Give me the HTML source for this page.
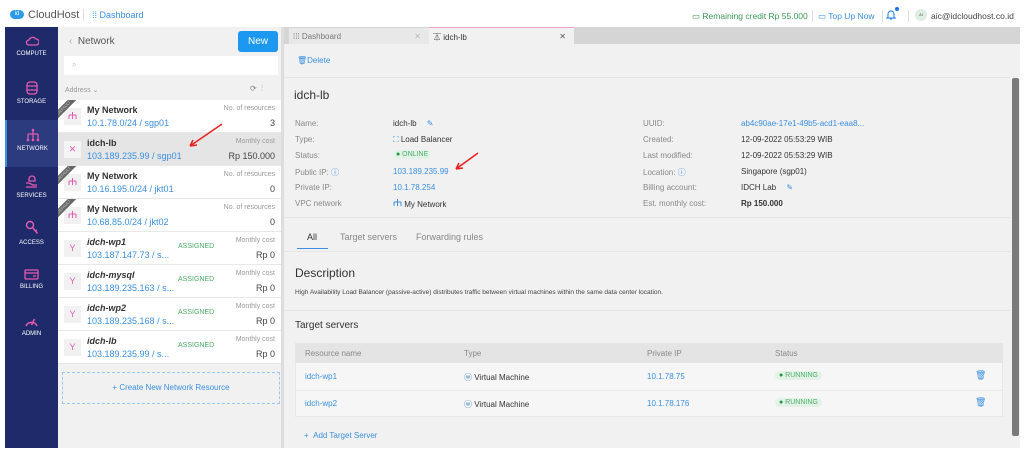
<!DOCTYPE html>
<html><head><meta charset="utf-8"><style>
*{box-sizing:border-box;margin:0;padding:0}
body{width:1024px;height:454px;background:#fff;font-family:"Liberation Sans",sans-serif;position:relative;overflow:hidden;font-size:8px;color:#333}
.a{position:absolute}
.blue{color:#3a8fe0}
.lbl{color:#888;font-size:8px}
.side{left:5px;top:27px;width:53px;height:421px;background:#1e2a69}
.nav{position:absolute;left:0;width:53px;text-align:center;color:#fff;font-size:6px}
.nav svg{display:block;margin:0 auto 4px}
.list{left:58px;top:27px;width:226px;height:421px;background:#f1f1f1;border-right:3px solid #ddd}
.row{position:absolute;left:0;width:223px;height:33px;background:#fff;border-bottom:1px solid #e8e8e8;overflow:hidden}
.ic{position:absolute;left:6px;top:8px;width:17px;height:17px;background:#f1f1f1;color:#e55bb0;font-size:9px;text-align:center;line-height:17px}
.ic svg{margin-top:4px}
.nm{position:absolute;left:29px;top:5px;font-weight:bold;font-size:9px;color:#333}
.ip{position:absolute;left:29px;top:18px;font-size:9px;color:#3a8fe0}
.rl{position:absolute;right:6px;top:5px;font-size:7px;color:#999}
.rv{position:absolute;right:6px;top:18px;font-size:9px;color:#444}
.asg{position:absolute;left:120px;top:11px;font-size:7px;color:#4caf6a}
.rib{position:absolute;left:-9px;top:5px;width:30px;height:6px;background:#666;transform:rotate(-45deg);color:#ccc;font-size:4px;text-align:center;line-height:6px}
.main{left:284px;top:27px;width:736px;height:421px;background:#f1f1f1}
.d{position:absolute;font-size:8px}
</style></head><body>
<!-- top bar -->
<div class="a" style="left:10px;top:10px;width:14px;height:9px;background:#2d9be8;border-radius:5px;color:#fff;font-size:6px;text-align:center;line-height:9px">id</div>
<div class="a" style="left:28px;top:9px;font-size:11px;color:#555">CloudHost</div>
<div class="a" style="left:83px;top:9px;width:1px;height:12px;background:#ddd"></div>
<div class="a blue" style="left:92px;top:10px;font-size:9px">⁞⁞ Dashboard</div>
<div class="a" style="left:692px;top:11px;font-size:8.5px;color:#3b9a5a">▭ Remaining credit Rp 55.000</div>
<div class="a" style="left:812px;top:10px;width:1px;height:12px;background:#ddd"></div>
<div class="a blue" style="left:818px;top:11px;font-size:8.5px">▭ Top Up Now</div>
<div class="a" style="left:882px;top:10px;width:1px;height:12px;background:#ddd"></div>
<svg class="a" style="left:886px;top:9px" width="10" height="11" viewBox="0 0 10 11"><path d="M2 8V5a3 3 0 0 1 6 0v3l1 1H1zM4 10h2" fill="none" stroke="#3a8fe0" stroke-width="1.2"/></svg>
<div class="a" style="left:895px;top:7px;width:4px;height:4px;border-radius:50%;background:#1a73e8"></div>
<div class="a" style="left:908px;top:10px;width:1px;height:12px;background:#ddd"></div>
<div class="a" style="left:915px;top:9px;width:12px;height:12px;border-radius:50%;background:#dfeee4;font-size:4px;text-align:center;line-height:12px;color:#555">AI</div>
<div class="a" style="left:931px;top:11px;font-size:8.5px;color:#444">aic@idcloudhost.co.id</div>

<!-- sidebar -->
<div class="a side">
 <div class="nav" style="top:8px"><svg width="14" height="12" viewBox="0 0 14 12"><path d="M4 10h7a3 3 0 0 0 0-6 4 4 0 0 0-7 1 2.5 2.5 0 0 0 0 5z" fill="none" stroke="#e55bb0" stroke-width="1.3"/></svg>COMPUTE</div>
 <div class="nav" style="top:54px"><svg width="12" height="14" viewBox="0 0 12 14"><rect x="1" y="1" width="10" height="12" rx="3" fill="none" stroke="#e55bb0" stroke-width="1.3"/><path d="M1 5h10M1 9h10" stroke="#e55bb0" stroke-width="1.3"/></svg>STORAGE</div>
 <div class="nav" style="top:93px;height:47px;padding-top:8px;background:#2c3a7e;border-left:2px solid #3a8fe0"><svg width="14" height="14" viewBox="0 0 14 14"><path d="M7 1v5M2 6h10M2 6v5M7 6v5M12 6v5" fill="none" stroke="#e55bb0" stroke-width="1.2"/><circle cx="7" cy="2" r="1.3" fill="#e55bb0"/><circle cx="2" cy="12" r="1.3" fill="#e55bb0"/><circle cx="7" cy="12" r="1.3" fill="#e55bb0"/><circle cx="12" cy="12" r="1.3" fill="#e55bb0"/></svg>NETWORK</div>
 <div class="nav" style="top:148px"><svg width="16" height="14" viewBox="0 0 16 14"><path d="M2 8h3l4 2h4M5 4a3 3 0 0 1 6 0v2H5z M2 12h11" fill="none" stroke="#e55bb0" stroke-width="1.3"/></svg>SERVICES</div>
 <div class="nav" style="top:193px"><svg width="14" height="16" viewBox="0 0 14 16"><circle cx="5" cy="5" r="3.5" fill="none" stroke="#e55bb0" stroke-width="1.4"/><path d="M7.5 7.5l5 6M10 11l2-1" stroke="#e55bb0" stroke-width="1.4"/></svg>ACCESS</div>
 <div class="nav" style="top:242px"><svg width="15" height="11" viewBox="0 0 15 11"><rect x="1" y="1" width="13" height="9" rx="1" fill="none" stroke="#e55bb0" stroke-width="1.3"/><path d="M1 4h13M9 7h3" stroke="#e55bb0" stroke-width="1.3"/></svg>BILLING</div>
 <div class="nav" style="top:288px"><svg width="15" height="12" viewBox="0 0 15 12"><path d="M2 11a6 6 0 0 1 11 0M7.5 10l3-6" fill="none" stroke="#e55bb0" stroke-width="1.5"/></svg>ADMIN</div>
</div>

<!-- list panel -->
<div class="a list">
 <div class="a" style="left:11px;top:9px;font-size:10px;color:#555"><span style="color:#aaa">‹</span>&nbsp; Network</div>
 <div class="a" style="left:180px;top:4px;width:40px;height:21px;background:#1d98f0;border-radius:3px;color:#fff;font-size:10px;text-align:center;line-height:21px">New</div>
 <div class="a" style="left:6px;top:29px;width:214px;height:19px;background:#fff;color:#bbb;font-size:8px;padding:4px 8px">⌕</div>
 <div class="a" style="left:7px;top:59px;font-size:7px;color:#999">Address ⌄</div>
 <div class="a" style="left:192px;top:57px;font-size:8px;color:#888">⟳ &nbsp;⫶</div>
 <div class="row" style="top:73px"><div class="ic"><svg width="9" height="8" viewBox="0 0 9 8"><path d="M4.5 0v3M1 3h7M1 3v4M4.5 3v4M8 3v4" fill="none" stroke="#e55bb0"/></svg></div><div class="rib">DEFAULT</div><div class="nm">My Network</div><div class="ip">10.1.78.0/24 / sgp01</div><div class="rl">No. of resources</div><div class="rv">3</div></div>
 <div class="row" style="top:106px;background:#e5e5e5"><div class="ic" style="background:#f4f4f4">✕</div><div class="nm">idch-lb</div><div class="ip">103.189.235.99 / sgp01</div><div class="rl">Monthly cost</div><div class="rv">Rp 150.000</div></div>
 <div class="row" style="top:139px"><div class="ic"><svg width="9" height="8" viewBox="0 0 9 8"><path d="M4.5 0v3M1 3h7M1 3v4M4.5 3v4M8 3v4" fill="none" stroke="#e55bb0"/></svg></div><div class="rib">DEFAULT</div><div class="nm">My Network</div><div class="ip">10.16.195.0/24 / jkt01</div><div class="rl">No. of resources</div><div class="rv">0</div></div>
 <div class="row" style="top:172px"><div class="ic"><svg width="9" height="8" viewBox="0 0 9 8"><path d="M4.5 0v3M1 3h7M1 3v4M4.5 3v4M8 3v4" fill="none" stroke="#e55bb0"/></svg></div><div class="rib">DEFAULT</div><div class="nm">My Network</div><div class="ip">10.68.85.0/24 / jkt02</div><div class="rl">No. of resources</div><div class="rv">0</div></div>
 <div class="row" style="top:205px"><div class="ic">Y</div><div class="nm"><i>idch-wp1</i></div><div class="ip">103.187.147.73 / s...</div><div class="asg">ASSIGNED</div><div class="rl">Monthly cost</div><div class="rv">Rp 0</div></div>
 <div class="row" style="top:238px"><div class="ic">Y</div><div class="nm"><i>idch-mysql</i></div><div class="ip">103.189.235.163 / s...</div><div class="asg">ASSIGNED</div><div class="rl">Monthly cost</div><div class="rv">Rp 0</div></div>
 <div class="row" style="top:271px"><div class="ic">Y</div><div class="nm"><i>idch-wp2</i></div><div class="ip">103.189.235.168 / s...</div><div class="asg">ASSIGNED</div><div class="rl">Monthly cost</div><div class="rv">Rp 0</div></div>
 <div class="row" style="top:304px"><div class="ic">Y</div><div class="nm"><i>idch-lb</i></div><div class="ip">103.189.235.99 / s...</div><div class="asg">ASSIGNED</div><div class="rl">Monthly cost</div><div class="rv">Rp 0</div></div>
 <div class="a blue" style="left:4px;top:345px;width:218px;height:32px;border:1px dashed #9cc8ef;text-align:center;line-height:30px;font-size:8px">+ Create New Network Resource</div>
</div>

<!-- main -->
<div class="a main">
 <div class="a" style="left:0;top:0;width:736px;height:17px;background:#d5d5d5"></div>
 <div class="a" style="left:5px;top:1px;width:140px;height:16px;background:#e8e8e8;color:#777;font-size:8px;padding:4px 4px">⁞⁞⁞ Dashboard<span style="position:absolute;right:8px;color:#bbb">✕</span></div>
 <div class="a" style="left:145px;top:0;width:145px;height:17px;background:#f1f1f1;border-top:1px solid #f0a0c8;color:#333;font-size:8px;padding:4px 4px">⏄ idch-lb<span style="position:absolute;right:8px;color:#555">✕</span></div>
 <div class="a blue" style="left:13px;top:29px;font-size:8px">🗑Delete</div>
 <div class="a" style="left:0;top:50px;width:726px;height:1px;background:#e4e4e4"></div>
 <div class="a" style="left:10px;top:61px;font-size:12px;color:#333">idch-lb</div>
 <div class="a" style="left:728px;top:51px;width:7px;height:358px;background:#7a7a7a;border-radius:2px"></div>
</div>
<div class="d lbl" style="left:295px;top:119px">Name:</div><div class="d" style="left:393px;top:119px">idch-lb <span class="blue" style="margin-left:8px">✎</span></div>
<div class="d lbl" style="left:295px;top:135px">Type:</div><div class="d" style="left:393px;top:135px"><span class="blue">⛶</span> Load Balancer</div>
<div class="d lbl" style="left:295px;top:151px">Status:</div><div class="d" style="left:393px;top:150px;background:#e3f2e7;color:#4caf6a;font-size:7px;padding:1px 3px;border-radius:5px"><span style="color:#1a9a40">●</span> ONLINE</div>
<div class="d lbl" style="left:295px;top:167px">Public IP: <span class="blue">ⓘ</span></div><div class="d blue" style="left:393px;top:167px">103.189.235.99</div>
<div class="d lbl" style="left:295px;top:183px">Private IP:</div><div class="d blue" style="left:393px;top:183px">10.1.78.254</div>
<div class="d lbl" style="left:295px;top:199px">VPC network</div><div class="d" style="left:393px;top:199px"><svg width="9" height="8" viewBox="0 0 9 8"><path d="M4.5 0v3M1 3h7M1 3v4M4.5 3v4M8 3v4" fill="none" stroke="#3a8fe0"/></svg> My Network</div>
<div class="d lbl" style="left:643px;top:119px">UUID:</div><div class="d blue" style="left:741px;top:119px">ab4c90ae-17e1-49b5-acd1-eaa8...</div>
<div class="d lbl" style="left:643px;top:135px">Created:</div><div class="d" style="left:741px;top:135px">12-09-2022 05:53:29 WIB</div>
<div class="d lbl" style="left:643px;top:151px">Last modified:</div><div class="d" style="left:741px;top:151px">12-09-2022 05:53:29 WIB</div>
<div class="d lbl" style="left:643px;top:167px">Location: <span class="blue">ⓘ</span></div><div class="d" style="left:741px;top:167px">Singapore (sgp01)</div>
<div class="d lbl" style="left:643px;top:183px">Billing account:</div><div class="d" style="left:741px;top:183px">IDCH Lab <span class="blue" style="margin-left:8px">✎</span></div>
<div class="d lbl" style="left:643px;top:199px">Est. monthly cost:</div><div class="d" style="left:741px;top:199px;font-weight:bold">Rp 150.000</div>
<svg class="a" style="left:0;top:0" width="1024" height="454"><path d="M222 124L190 146M190 146l7-1M190 146l3-6M478 153L456 169M456 169l7-1M456 169l3-6" stroke="#e82020" stroke-width="1.5" fill="none"/></svg>
<div class="a" style="left:284px;top:217px;width:726px;height:1px;background:#e4e4e4"></div>
<div class="d" style="left:307px;top:232px;font-size:9px">All</div>
<div class="a" style="left:297px;top:248px;width:31px;height:1px;background:#3a8fe0"></div>
<div class="d" style="left:340px;top:232px;font-size:9px;color:#888">Target servers</div>
<div class="d" style="left:416px;top:232px;font-size:9px;color:#888">Forwarding rules</div>
<div class="a" style="left:284px;top:251px;width:726px;height:1px;background:#e4e4e4"></div>
<div class="d" style="left:295px;top:266px;font-size:12px;color:#333">Description</div>
<div class="d" style="left:295px;top:289px;font-size:6.5px;color:#444">High Availability Load Balancer (passive-active) distributes traffic between virtual machines within the same data center location.</div>
<div class="a" style="left:284px;top:310px;width:726px;height:1px;background:#e4e4e4"></div>
<div class="d" style="left:295px;top:320px;font-size:10px;color:#333">Target servers</div>
<div class="a" style="left:295px;top:343px;width:708px;height:74px;background:#f6f6f6;border:1px solid #e8e8e8"></div>
<div class="a" style="left:295px;top:343px;width:708px;height:20px;background:#e4e4e4"></div>
<div class="a" style="left:295px;top:390px;width:708px;height:1px;background:#e8e8e8"></div>
<div class="d lbl" style="left:305px;top:349px">Resource name</div><div class="d lbl" style="left:464px;top:349px">Type</div><div class="d lbl" style="left:647px;top:349px">Private IP</div><div class="d lbl" style="left:775px;top:349px">Status</div>
<div class="d blue" style="left:305px;top:372px">idch-wp1</div><div class="d" style="left:464px;top:372px"><span style="color:#3a7ab0">ⓦ</span> Virtual Machine</div><div class="d blue" style="left:647px;top:372px">10.1.78.75</div>
<div class="d" style="left:775px;top:371px;background:#e3f2e7;color:#4caf6a;font-size:7px;padding:1px 4px;border-radius:5px"><span style="color:#1a9a40">●</span> RUNNING</div><div class="d blue" style="left:975px;top:370px;font-size:9px">🗑</div>
<div class="d blue" style="left:305px;top:399px">idch-wp2</div><div class="d" style="left:464px;top:399px"><span style="color:#3a7ab0">ⓦ</span> Virtual Machine</div><div class="d blue" style="left:647px;top:399px">10.1.78.176</div>
<div class="d" style="left:775px;top:398px;background:#e3f2e7;color:#4caf6a;font-size:7px;padding:1px 4px;border-radius:5px"><span style="color:#1a9a40">●</span> RUNNING</div><div class="d blue" style="left:975px;top:397px;font-size:9px">🗑</div>
<div class="d blue" style="left:304px;top:431px">+ &nbsp;Add Target Server</div>
</body></html>
